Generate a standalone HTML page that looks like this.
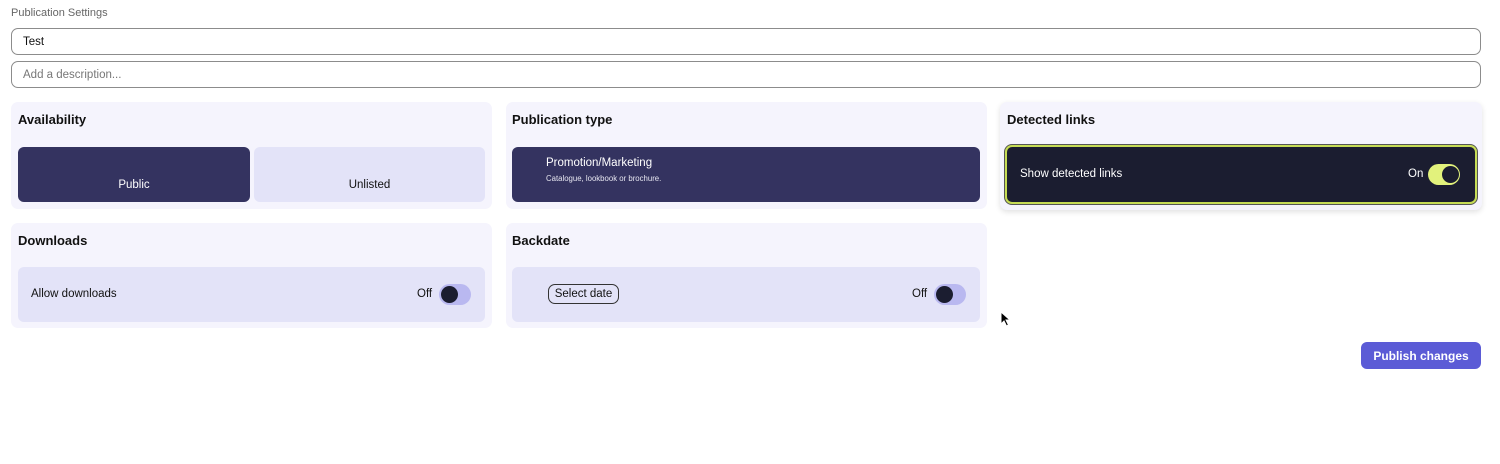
<!DOCTYPE html>
<html><head><style>
*{box-sizing:border-box;margin:0;padding:0}
body{width:1500px;height:464px;background:#fff;font-family:"Liberation Sans",sans-serif;position:relative;overflow:hidden;color:#111}
.abs{position:absolute}
.lbl{left:11px;top:7px;font-size:11px;color:#666}
.inp{left:11px;width:1470px;height:27px;border:1px solid #8c8c8c;border-radius:7px;font-size:11.5px;padding:0 11px;line-height:26px}
.card{background:#f5f4fd;border-radius:7px}
.h{font-size:13px;font-weight:bold;color:#111}
.dark{background:#343360;border-radius:6px;color:#fff}
.light{background:#e3e3f8;border-radius:6px}
.tog{width:32px;height:21px;border-radius:11px}
.knob{width:17px;height:17px;border-radius:50%;background:#1b1d30;position:absolute;top:2px}
.t{font-size:11.5px}
</style></head><body>
<div class="abs lbl">Publication Settings</div>
<div class="abs inp" style="top:28px;color:#111">Test</div>
<div class="abs inp" style="top:61px;color:#777">Add a description...</div>

<div class="abs card" style="left:11px;top:102px;width:481px;height:107px"></div>
<div class="abs h" style="left:18px;top:112px">Availability</div>
<div class="abs dark" style="left:18px;top:147px;width:232px;height:55px"></div>
<div class="abs t" style="left:18px;top:179px;width:232px;text-align:center;color:#fff">Public</div>
<div class="abs light" style="left:254px;top:147px;width:231px;height:55px"></div>
<div class="abs t" style="left:254px;top:179px;width:231px;text-align:center">Unlisted</div>

<div class="abs card" style="left:506px;top:102px;width:481px;height:107px"></div>
<div class="abs h" style="left:512px;top:112px">Publication type</div>
<div class="abs dark" style="left:512px;top:147px;width:468px;height:55px"></div>
<div class="abs t" style="left:546px;top:157px;color:#fff">Promotion/Marketing</div>
<div class="abs" style="left:546px;top:174px;font-size:7.8px;color:#e6e6f0">Catalogue, lookbook or brochure.</div>

<div class="abs card" style="left:1000px;top:102px;width:482px;height:108px;box-shadow:0 2px 6px rgba(0,0,0,.12)"></div>
<div class="abs h" style="left:1007px;top:112px">Detected links</div>
<div class="abs" style="left:1005px;top:145px;width:472px;height:59px;background:#1b1d30;border:2px solid #c6dc55;border-radius:7px;box-shadow:0 0 0 1px #555"></div>
<div class="abs t" style="left:1020px;top:168px;color:#fff">Show detected links</div>
<div class="abs t" style="left:1408px;top:168px;color:#fff">On</div>
<div class="abs tog" style="left:1428px;top:164px;background:#e2f27c"><div class="knob" style="left:14px"></div></div>

<div class="abs card" style="left:11px;top:223px;width:481px;height:105px"></div>
<div class="abs h" style="left:18px;top:233px">Downloads</div>
<div class="abs light" style="left:18px;top:267px;width:467px;height:55px"></div>
<div class="abs t" style="left:31px;top:288px">Allow downloads</div>
<div class="abs t" style="left:417px;top:288px">Off</div>
<div class="abs tog" style="left:439px;top:284px;background:#b9b8f0"><div class="knob" style="left:2px"></div></div>

<div class="abs card" style="left:506px;top:223px;width:481px;height:105px"></div>
<div class="abs h" style="left:512px;top:233px">Backdate</div>
<div class="abs light" style="left:512px;top:267px;width:468px;height:55px"></div>
<div class="abs t" style="left:548px;top:284px;width:71px;height:20px;border:1px solid #333;border-radius:7px;text-align:center;line-height:19px">Select date</div>
<div class="abs t" style="left:912px;top:288px">Off</div>
<div class="abs tog" style="left:934px;top:284px;background:#b9b8f0"><div class="knob" style="left:2px"></div></div>

<svg class="abs" style="left:1000px;top:311px" width="12" height="16" viewBox="0 0 12 16"><path d="M1 1 L1 13 L4 10 L6.5 15 L8.5 14 L6 9 L10 9 Z" fill="#000" stroke="#fff" stroke-width="1"/></svg>

<div class="abs" style="left:1361px;top:342px;width:120px;height:27px;background:#5b5bd6;border-radius:6px;color:#fff;font-size:12px;font-weight:bold;text-align:center;line-height:28px">Publish changes</div>
</body></html>
